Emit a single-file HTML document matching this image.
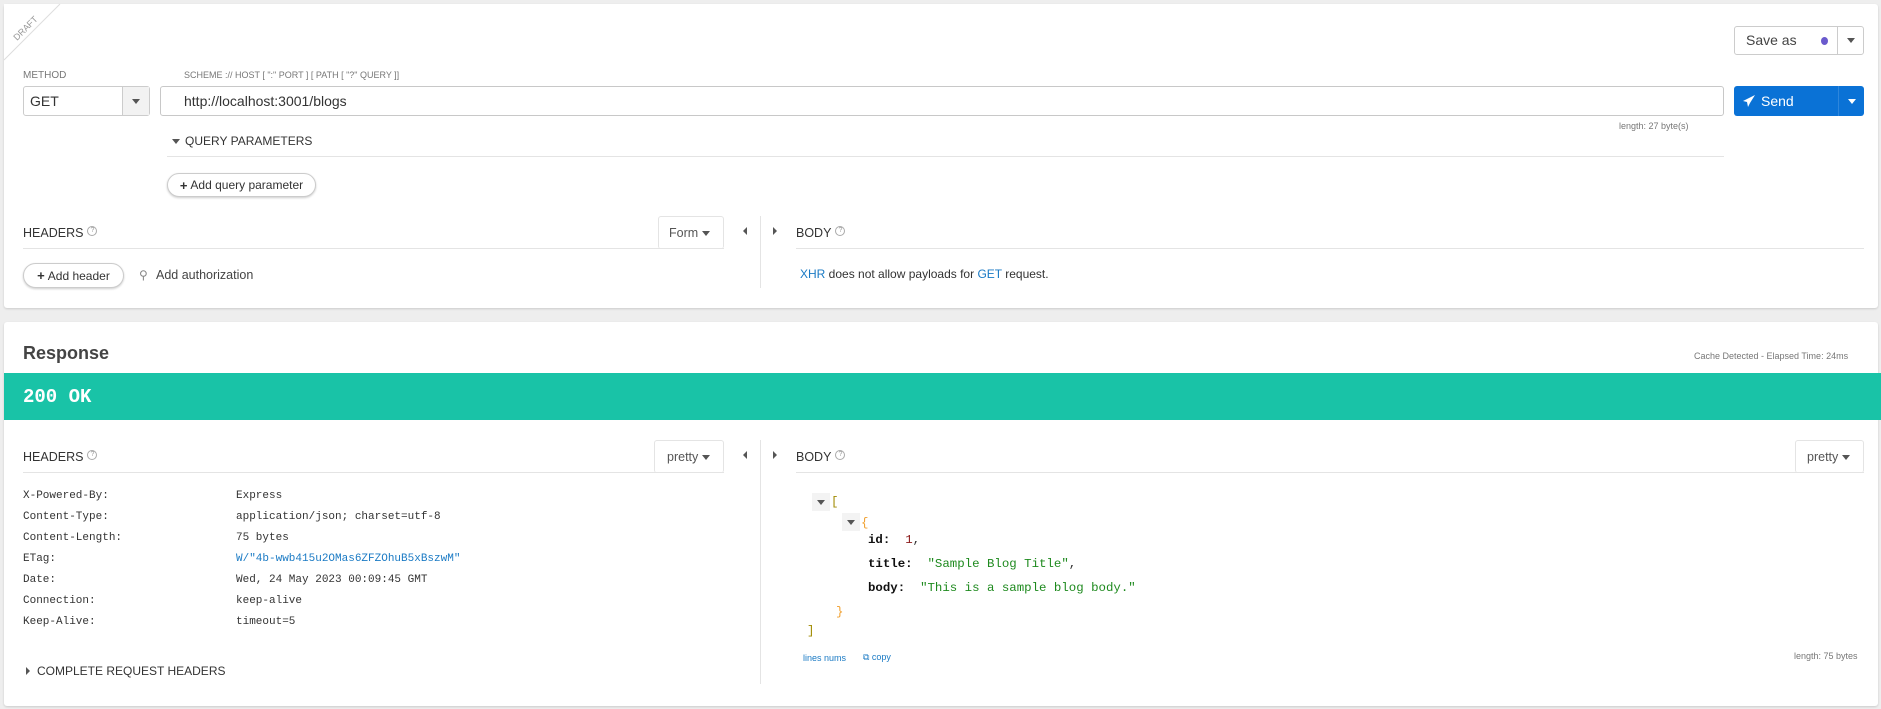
<!DOCTYPE html>
<html><head><meta charset="utf-8"><style>
*{box-sizing:border-box;margin:0;padding:0}
body{width:1881px;height:709px;background:#eeeeee;font-family:"Liberation Sans",Arial,sans-serif;color:#333;position:relative;overflow:hidden}
.p{position:absolute;background:#fff;border-radius:3px;box-shadow:0 1px 2px rgba(0,0,0,.15)}
.a{position:absolute;white-space:nowrap}
.lbl{font-size:10px;color:#777}
.btn{position:absolute;border:1px solid #ccc;border-radius:3px;background:#fff}
.pill{position:absolute;border:1px solid #ccc;border-radius:13px;background:#fff;box-shadow:0 1px 2px rgba(0,0,0,.2);font-size:12px;color:#333;display:flex;align-items:center;justify-content:center}
.tri{display:inline-block;width:0;height:0;border-left:4px solid transparent;border-right:4px solid transparent;border-top:5px solid #555;vertical-align:middle}
.tri.b{display:block}
.hl{position:absolute;height:1px;background:#e4e4e4}
.vl{position:absolute;width:1px;background:#e4e4e4}
.mono{font-family:"Liberation Mono",monospace}
.hd .a{font-size:11px;font-family:"Liberation Mono",monospace;color:#333;line-height:14px}
.j{font-family:"Liberation Mono",monospace;font-size:12.4px;line-height:16px}
.q{display:inline-block;width:10px;height:10px;border:1px solid #aaa;border-radius:50%;font-size:7px;color:#999;text-align:center;line-height:8px;vertical-align:top;margin-left:4px}
</style></head><body>
<div class="p" style="left:4px;top:4px;width:1874px;height:304px"></div>
<div class="p" style="left:4px;top:322px;width:1874px;height:384px"></div>

<svg class="a" style="left:4px;top:4px" width="60" height="60"><polygon points="0,0 56,0 0,56" fill="#fff"/><line x1="56" y1="0" x2="0" y2="56" stroke="#ddd"/><text x="0" y="0" transform="translate(13,37) rotate(-45)" font-size="9" fill="#999" font-family="Liberation Sans">DRAFT</text></svg>

<div class="btn" style="left:1734px;top:26px;width:130px;height:29px"></div>
<div class="a" style="left:1746px;top:32px;font-size:14px;color:#444">Save as</div>
<div class="a" style="left:1821px;top:37px;width:7px;height:8px;border-radius:50%;background:#6a5acd"></div>
<div class="vl" style="left:1837px;top:26px;height:29px;background:#ccc"></div>
<div class="a" style="left:1847px;top:38px"><span class="tri b"></span></div>

<div class="a lbl" style="left:23px;top:70px">METHOD</div>
<div class="a lbl" style="left:184px;top:70px;font-size:9px">SCHEME :// HOST [ ":" PORT ] [ PATH [ "?" QUERY ]]</div>

<div class="btn" style="left:23px;top:86px;width:127px;height:30px"></div>
<div class="a" style="left:122px;top:87px;width:27px;height:28px;background:#f2f2f2;border-left:1px solid #ccc"></div>
<div class="a" style="left:30px;top:93px;font-size:14px">GET</div>
<div class="a" style="left:132px;top:99px"><span class="tri b"></span></div>

<div class="btn" style="left:160px;top:86px;width:1564px;height:30px;border-color:#c8c8c8"></div>
<div class="a" style="left:184px;top:93px;font-size:14px;color:#333">http://localhost:3001/blogs</div>
<div class="a" style="left:1619px;top:121px;font-size:9px;color:#777">length: 27 byte(s)</div>

<div class="a" style="left:1734px;top:86px;width:130px;height:30px;background:#0a72d6;border-radius:3px"></div>
<div class="vl" style="left:1838px;top:86px;height:30px;background:#2d86dc"></div>
<svg class="a" style="left:1742px;top:94px" width="14" height="14" viewBox="0 0 14 14"><path d="M13 1 L1 7 L5 8 L6 13 L8 9 Z" fill="#fff"/></svg>
<div class="a" style="left:1761px;top:93px;font-size:14px;color:#fff">Send</div>
<div class="a" style="left:1848px;top:99px"><span class="tri b" style="border-top-color:#fff"></span></div>

<div class="a" style="left:172px;top:139px"><span class="tri b"></span></div>
<div class="a" style="left:185px;top:134px;font-size:12px;color:#333">QUERY PARAMETERS</div>
<div class="hl" style="left:167px;top:156px;width:1557px"></div>

<div class="pill" style="left:167px;top:173px;width:149px;height:24px"><b style="font-size:13px;margin-right:3px">+</b>Add query parameter</div>

<div class="a" style="left:23px;top:226px;font-size:12.5px">HEADERS<span class="q">?</span></div>
<div class="btn" style="left:658px;top:216px;width:66px;height:33px;border-bottom:none;border-color:#e4e4e4"></div>
<div class="a" style="left:669px;top:226px;font-size:12.5px;color:#555">Form <span class="tri"></span></div>
<div class="hl" style="left:23px;top:248px;width:701px"></div>
<div class="a" style="left:743px;top:227px;width:0;height:0;border-top:4px solid transparent;border-bottom:4px solid transparent;border-right:4px solid #555"></div>
<div class="a" style="left:773px;top:227px;width:0;height:0;border-top:4px solid transparent;border-bottom:4px solid transparent;border-left:4px solid #555"></div>
<div class="vl" style="left:760px;top:216px;height:72px"></div>
<div class="a" style="left:796px;top:226px;font-size:12.5px">BODY<span class="q">?</span></div>
<div class="hl" style="left:796px;top:248px;width:1068px"></div>

<div class="pill" style="left:23px;top:263px;width:101px;height:25px"><b style="font-size:13px;margin-right:3px">+</b>Add header</div>
<div class="a" style="left:139px;top:268px;font-size:12px;color:#888">&#9906;</div>
<div class="a" style="left:156px;top:268px;font-size:12.5px;color:#444">Add authorization</div>
<div class="a" style="left:800px;top:267px;font-size:12px;color:#333"><span style="color:#1a7ac4">XHR</span> does not allow payloads for <span style="color:#1a7ac4">GET</span> request.</div>

<div class="a" style="left:23px;top:343px;font-size:18px;font-weight:bold;color:#444">Response</div>
<div class="a" style="left:1694px;top:351px;font-size:9px;color:#777">Cache Detected - Elapsed Time: 24ms</div>
<div class="a" style="left:4px;top:373px;width:1877px;height:47px;background:#19c3a7"></div>
<div class="a mono" style="left:23px;top:386px;font-size:19px;font-weight:bold;color:#fff">200 OK</div>

<div class="a" style="left:23px;top:450px;font-size:12.5px">HEADERS<span class="q">?</span></div>
<div class="btn" style="left:654px;top:440px;width:70px;height:33px;border-bottom:none;border-color:#e4e4e4"></div>
<div class="a" style="left:667px;top:450px;font-size:12.5px;color:#555">pretty <span class="tri"></span></div>
<div class="hl" style="left:23px;top:472px;width:701px"></div>
<div class="a" style="left:743px;top:451px;width:0;height:0;border-top:4px solid transparent;border-bottom:4px solid transparent;border-right:4px solid #555"></div>
<div class="a" style="left:773px;top:451px;width:0;height:0;border-top:4px solid transparent;border-bottom:4px solid transparent;border-left:4px solid #555"></div>
<div class="vl" style="left:760px;top:440px;height:244px"></div>
<div class="a" style="left:796px;top:450px;font-size:12.5px">BODY<span class="q">?</span></div>
<div class="btn" style="left:1795px;top:440px;width:69px;height:33px;border-bottom:none;border-color:#e4e4e4"></div>
<div class="a" style="left:1807px;top:450px;font-size:12.5px;color:#555">pretty <span class="tri"></span></div>
<div class="hl" style="left:796px;top:472px;width:1068px"></div>

<div class="hd">
<div class="a" style="left:23px;top:489px">X-Powered-By:</div><div class="a" style="left:236px;top:489px">Express</div>
<div class="a" style="left:23px;top:510px">Content-Type:</div><div class="a" style="left:236px;top:510px">application/json; charset=utf-8</div>
<div class="a" style="left:23px;top:531px">Content-Length:</div><div class="a" style="left:236px;top:531px">75 bytes</div>
<div class="a" style="left:23px;top:552px">ETag:</div><div class="a" style="left:236px;top:552px;color:#1a7ac4">W/"4b-wwb415u2OMas6ZFZOhuB5xBszwM"</div>
<div class="a" style="left:23px;top:573px">Date:</div><div class="a" style="left:236px;top:573px">Wed, 24 May 2023 00:09:45 GMT</div>
<div class="a" style="left:23px;top:594px">Connection:</div><div class="a" style="left:236px;top:594px">keep-alive</div>
<div class="a" style="left:23px;top:615px">Keep-Alive:</div><div class="a" style="left:236px;top:615px">timeout=5</div>
</div>
<div class="a" style="left:26px;top:667px;width:0;height:0;border-top:4px solid transparent;border-bottom:4px solid transparent;border-left:4px solid #555"></div>
<div class="a" style="left:37px;top:664px;font-size:12px;color:#333">COMPLETE REQUEST HEADERS</div>

<div class="a" style="left:812px;top:493px;width:18px;height:18px;background:#f3f3f3"></div>
<div class="a" style="left:817px;top:500px"><span class="tri b"></span></div>
<div class="a j" style="left:831px;top:494px;color:#a08a00">[</div>
<div class="a" style="left:842px;top:513px;width:18px;height:18px;background:#f3f3f3"></div>
<div class="a" style="left:847px;top:520px"><span class="tri b"></span></div>
<div class="a j" style="left:861px;top:515px;color:#f0a030">{</div>
<div class="a j" style="left:868px;top:532px"><b style="color:#111">id:</b>&nbsp; <span style="color:#8b1a1a">1</span>,</div>
<div class="a j" style="left:868px;top:556px"><b style="color:#111">title:</b>&nbsp; <span style="color:#1e8a1e">"Sample Blog Title"</span>,</div>
<div class="a j" style="left:868px;top:580px"><b style="color:#111">body:</b>&nbsp; <span style="color:#1e8a1e">"This is a sample blog body."</span></div>
<div class="a j" style="left:836px;top:604px;color:#f0a030">}</div>
<div class="a j" style="left:807px;top:623px;color:#a08a00">]</div>
<div class="a" style="left:803px;top:653px;font-size:9px;color:#1a7ac4">lines nums</div>
<div class="a" style="left:863px;top:652px;font-size:9px;color:#1a7ac4">&#10697; copy</div>
<div class="a" style="left:1794px;top:651px;font-size:9px;color:#777">length: 75 bytes</div>
</body></html>
